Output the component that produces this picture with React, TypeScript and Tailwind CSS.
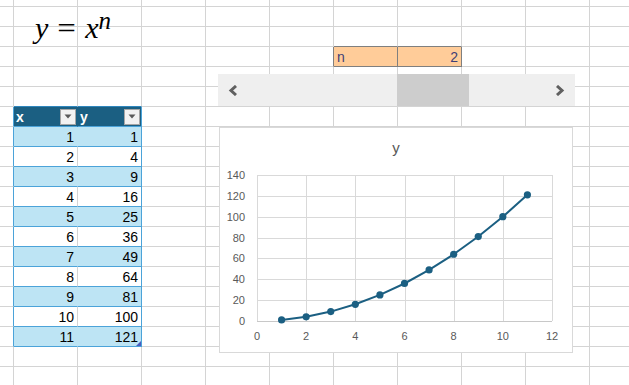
import React from "react";

const HEADER = "bg-[#1b5f82]";

function Dropdown() {
  return (
    <div className="w-[16px] h-[16px] bg-[#f2f2f2] border border-[#a6a6a6] flex items-center justify-center">
      <svg width="8" height="5" viewBox="0 0 8 5">
        <polygon points="0.5,0.5 7.5,0.5 4,4.5" fill="#5a5a5a" />
      </svg>
    </div>
  );
}

function Chart() {
  const x0 = 37;
  const xu = 295 / 12;
  const y0 = 193;
  const yu = 146 / 140;
  const X = (v: number) => x0 + v * xu;
  const Y = (v: number) => y0 - v * yu;
  const xs = [0, 2, 4, 6, 8, 10, 12];
  const ys = [0, 20, 40, 60, 80, 100, 120, 140];
  const pts = Array.from({ length: 11 }, (_, i) => [i + 1, (i + 1) * (i + 1)]);
  const line = pts.map(([a, b]) => `${X(a).toFixed(1)},${Y(b).toFixed(1)}`).join(" ");
  return (
    <svg width="352" height="224" viewBox="0 0 352 224" className="block">
      {ys.map((v) => (
        <line
          key={"h" + v}
          x1={x0}
          x2={X(12)}
          y1={Math.round(Y(v)) + 0.5}
          y2={Math.round(Y(v)) + 0.5}
          stroke={v === 0 ? "#c8c8c8" : "#d9d9d9"}
          strokeWidth="1"
        />
      ))}
      {xs.map((v) => (
        <line
          key={"v" + v}
          x1={Math.round(X(v)) + 0.5}
          x2={Math.round(X(v)) + 0.5}
          y1={Y(140)}
          y2={y0}
          stroke="#d9d9d9"
          strokeWidth="1"
        />
      ))}
      <text x="176" y="25" textAnchor="middle" fontSize="15" fill="#595959" fontFamily="'Liberation Sans', Arial, sans-serif">
        y
      </text>
      {ys.map((v) => (
        <text
          key={"yl" + v}
          x="25"
          y={Math.round(Y(v)) + 4}
          textAnchor="end"
          fontSize="11"
          fill="#595959"
          fontFamily="'Liberation Sans', Arial, sans-serif"
        >
          {v}
        </text>
      ))}
      {xs.map((v) => (
        <text
          key={"xl" + v}
          x={X(v)}
          y="212"
          textAnchor="middle"
          fontSize="11"
          fill="#595959"
          fontFamily="'Liberation Sans', Arial, sans-serif"
        >
          {v}
        </text>
      ))}
      <polyline points={line} fill="none" stroke="#1b5f82" strokeWidth="2" strokeLinejoin="round" />
      {pts.map(([a, b]) => (
        <circle key={"p" + a} cx={X(a)} cy={Y(b)} r="3.6" fill="#1b5f82" />
      ))}
    </svg>
  );
}

function Chevron({ dir }: { dir: "l" | "r" }) {
  return (
    <svg width="11" height="11" viewBox="0 0 11 11">
      <polyline
        points={dir === "l" ? "8,1 3,5.5 8,10" : "3,1 8,5.5 3,10"}
        fill="none"
        stroke="#606060"
        strokeWidth="3"
      />
    </svg>
  );
}

export default function App() {
  const cells: React.ReactNode[] = [];
  for (let r = 0; r < 20; r++) {
    for (let c = 0; c < 11; c++) {
      let bg = "bg-white";
      let br = "border-r-[#d4d4d4]";
      let bb = "border-b-[#d4d4d4]";
      let content: React.ReactNode = null;
      let extra = "";
      const inTable = c >= 1 && c <= 2 && r >= 6 && r <= 17;
      if (r === 5 && (c === 1 || c === 2)) bb = "border-b-[#2f86bd]";
      if (c === 0 && r >= 6 && r <= 17) br = "border-r-[#4ba3d9]";
      if (inTable) {
        bb = "border-b-[#4ba3d9]";
        if (r === 6) {
          bg = HEADER;
          br = c === 1 ? "border-r-[#1b5f82]" : "border-r-[#4ba3d9]";
          content = (
            <div className="flex items-center justify-between h-full pl-[2px] pr-[1px]">
              <span className="text-white font-bold text-[14px] leading-none">{c === 1 ? "x" : "y"}</span>
              <Dropdown />
            </div>
          );
        } else {
          const x = r - 6;
          const blue = x % 2 === 1;
          bg = blue ? "bg-[#bde4f4]" : "bg-white";
          br = c === 1 ? (blue ? "border-r-[#bde4f4]" : "border-r-[#d4d4d4]") : "border-r-[#4ba3d9]";
          content = (
            <div className="h-full flex items-center justify-end pr-[3px] text-[14px] text-black leading-none">
              {c === 1 ? x : x * x}
            </div>
          );
          if (r === 17 && c === 2) extra = "relative";
        }
      }
      if (r === 2 && (c === 6 || c === 7)) bb = "border-b-[#7f7f7f]";
      if (r === 3 && c === 5) br = "border-r-[#7f7f7f]";
      if (r === 3 && (c === 6 || c === 7)) {
        bg = "bg-[#ffcc99]";
        br = "border-r-[#7f7f7f]";
        bb = "border-b-[#7f7f7f]";
        content =
          c === 6 ? (
            <div className="h-full flex items-center pl-[3px] text-[14px] text-[#3f3f76] leading-none">n</div>
          ) : (
            <div className="h-full flex items-center justify-end pr-[3px] text-[14px] text-[#3f3f76] leading-none">2</div>
          );
      }
      cells.push(
        <div key={r + "-" + c} className={`border-r border-b overflow-hidden ${bg} ${br} ${bb} ${extra}`}>
          {content}
          {r === 17 && c === 2 && (
            <svg width="5" height="5" viewBox="0 0 5 5" className="absolute right-0 bottom-0">
              <polygon points="5,0 5,5 0,5" fill="#4a5cc0" />
            </svg>
          )}
        </div>
      );
    }
  }

  return (
    <div className="relative w-[629px] h-[385px] overflow-hidden bg-white font-['Liberation_Sans',Arial,sans-serif]">
      <div className="grid grid-cols-[14px_repeat(10,64px)] grid-rows-[7px_repeat(19,20px)]">{cells}</div>

      {/* equation (floating object) */}
      <div className="absolute left-[35px] top-[13px] flex items-baseline text-[30px] leading-none text-black font-['Liberation_Serif','Times_New_Roman',serif]">
        <span className="italic">y</span>
        <span className="ml-[10px] scale-x-110">=</span>
        <span className="italic ml-[10px]">x</span>
        <span className="italic text-[25px] relative top-[-9px]">n</span>
      </div>

      {/* scroll bar form control (floating object) */}
      <div className="absolute left-[218px] top-[74px] w-[357px] h-[32px] bg-[#efefef] flex items-center justify-between px-[10px]">
        <Chevron dir="l" />
        <Chevron dir="r" />
        <div className="absolute left-[179px] top-0 w-[72px] h-full bg-[#cdcdcd]" />
      </div>

      {/* chart (floating object) */}
      <div className="absolute left-[219px] top-[127px] w-[354px] h-[226px] border border-[#d9d9d9] bg-white">
        <Chart />
      </div>
    </div>
  );
}
